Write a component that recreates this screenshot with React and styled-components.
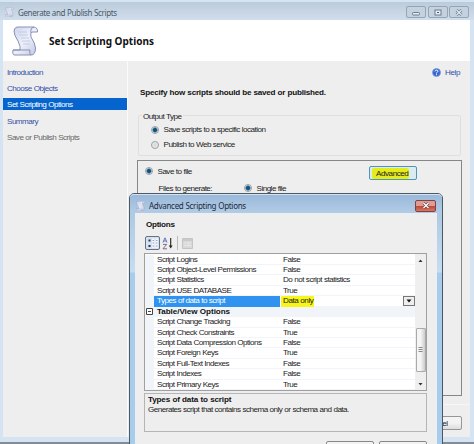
import React from "react";
import styled, { createGlobalStyle } from "styled-components";

const GlobalStyle = createGlobalStyle`
  * { box-sizing: border-box; }
  body {
    margin: 0;
    overflow: hidden;
    font-family: "Liberation Sans", Arial, sans-serif;
    font-size: 8.1px;
    letter-spacing: -0.52px;
    word-spacing: 0.2px;
    color: #1c1c1c;
  }
`;

const steps = [
  { label: "Introduction" },
  { label: "Choose Objects" },
  { label: "Set Scripting Options", active: true },
  { label: "Summary" },
  { label: "Save or Publish Scripts", disabled: true },
];

const options = [
  { name: "Script Logins", value: "False" },
  { name: "Script Object-Level Permissions", value: "False" },
  { name: "Script Statistics", value: "Do not script statistics" },
  { name: "Script USE DATABASE", value: "True" },
  { name: "Types of data to script", value: "Data only", selected: true },
  { name: "Table/View Options", category: true },
  { name: "Script Change Tracking", value: "False" },
  { name: "Script Check Constraints", value: "True" },
  { name: "Script Data Compression Options", value: "False" },
  { name: "Script Foreign Keys", value: "True" },
  { name: "Script Full-Text Indexes", value: "False" },
  { name: "Script Indexes", value: "False" },
  { name: "Script Primary Keys", value: "True" },
];

const ScrollIcon = ({ width, height }) => (
  <svg width={width} height={height} viewBox="0 0 26 30" preserveAspectRatio="none">
    <defs>
      <linearGradient id="paper" x1="0" y1="0" x2="1" y2="1">
        <stop offset="0" stopColor="#ccd4ed" />
        <stop offset=".5" stopColor="#edf0fa" />
        <stop offset="1" stopColor="#bfc6e4" />
      </linearGradient>
    </defs>
    <path
      d="M5 1H22Q26 2 25.5 6H20Q18 7 19 11Q23 17 23.5 22Q23.5 29 19 29H2Q0 28 1 24H8Q9 21 6 15Q2 9 2 5Q2 2 5 1Z"
      fill="url(#paper)"
      stroke="#8990b5"
      strokeWidth="1"
    />
    <path d="M22 1Q18 2 19 7M1 24H18Q17 28 19 29" fill="none" stroke="#8990b5" />
    <path d="M6 6H15M7 9H16M9 12H17M10 15H18M11 18H18" stroke="#bcc4de" strokeWidth=".8" />
  </svg>
);

const HelpIcon = () => (
  <svg width="9" height="9" viewBox="0 0 9 9">
    <circle cx="4.5" cy="4.5" r="4" fill="#3868ce" stroke="#7a9ce0" strokeWidth=".8" />
    <path d="M3 3.4Q3.2 2.1 4.5 2.1Q6 2.2 5.9 3.4Q5.7 4.2 4.5 4.8V5.4M4.5 6.2V7.2" fill="none" stroke="#fff" strokeWidth="1" />
  </svg>
);

const SortIcon = () => (
  <svg width="12" height="13" viewBox="0 0 12 13">
    <path d="M1 5.5L3 .8L5 5.5M1.7 4H4.4" fill="none" stroke="#536db2" strokeWidth=".9" />
    <path d="M1 7.4H4.7L1 11.8H5" fill="none" stroke="#6f6076" strokeWidth=".9" />
    <path d="M8.7 1V10" stroke="#222" strokeWidth="1.1" />
    <path d="M6.8 8.5H10.6L8.7 11.5Z" fill="#222" />
  </svg>
);

const CategoryIcon = () => (
  <svg width="12" height="11" viewBox="0 0 12 11">
    <path d="M5 .5H7.5V10H5ZM8.5 .5H11V10H8.5Z" fill="#f4f7fb" />
    <path d="M1.5 1.5H3.5V3.5H1.5ZM1.5 7H3.5V9H1.5Z" fill="#1d3a66" />
    <path d="M5.5 2.5H7M9 2.5H10.5M5.5 5H7M9 5H10.5M5.5 8H7M9 8H10.5" stroke="#93a9c6" />
  </svg>
);

const PageIcon = () => (
  <svg width="11" height="11" viewBox="0 0 11 11">
    <path d="M.5 .5H10.5V10.5H.5Z" fill="#d9d9d9" stroke="#c4c4c4" />
    <path d="M1 2H10" stroke="#bbb" />
    <path d="M2.5 5H4M5 5H8.5M2.5 7.5H4M5 7.5H8.5" stroke="#eee" />
  </svg>
);

function App() {
  return (
    <Desktop>
      <GlobalStyle />
      <Window>
        <TitleBar>
          <ScrollIcon width={9} height={10} />
          <TitleText>Generate and Publish Scripts</TitleText>
          <WindowButtons>
            <WindowButton>
              <svg width="8" height="7"><rect x=".5" y="3.5" width="7" height="2.5" rx=".8" fill="#eef3f8" stroke="#5c6b7d" /></svg>
            </WindowButton>
            <WindowButton>
              <svg width="8" height="7"><rect x="1" y="1" width="6" height="5" fill="#eef3f8" stroke="#5c6b7d" /><path d="M3 3.5H5" stroke="#445" /></svg>
            </WindowButton>
            <WindowButton>
              <svg width="8" height="7"><path d="M1.5 1L6.5 6M6.5 1L1.5 6" stroke="#5c6b7d" strokeWidth="2.6" /><path d="M1.5 1L6.5 6M6.5 1L1.5 6" stroke="#eef3f8" strokeWidth="1.2" /></svg>
            </WindowButton>
          </WindowButtons>
        </TitleBar>
        <Header>
          <ScrollIcon width={26} height={30} />
          <HeaderTitle>Set Scripting Options</HeaderTitle>
        </Header>
        <Body>
          <Sidebar>
            {steps.map((step) => (
              <Step key={step.label} $active={step.active} $disabled={step.disabled}>
                {step.label}
              </Step>
            ))}
          </Sidebar>
          <Main>
            <Help>
              <HelpIcon /> Help
            </Help>
            <Question>Specify how scripts should be saved or published.</Question>
            <OutputType>
              <Legend>Output Type</Legend>
              <RadioRow>
                <Radio $checked /> Save scripts to a specific location
              </RadioRow>
              <RadioRow>
                <Radio /> Publish to Web service
              </RadioRow>
            </OutputType>
            <FilePanel>
              <FileRow>
                <Radio $checked />
                <SaveLabel>Save to file</SaveLabel>
                <AdvancedButton>
                  <ButtonMark>Advanced</ButtonMark>
                </AdvancedButton>
              </FileRow>
              <GenerateRow>
                <GenerateLabel>Files to generate:</GenerateLabel>
                <Radio $checked />
                <span>Single file</span>
              </GenerateRow>
            </FilePanel>
            <Footer>
              <CancelButton>Cancel</CancelButton>
            </Footer>
          </Main>
        </Body>
      </Window>

      <Dialog>
        <DialogTitle>
          <ScrollIcon width={9} height={10} />
          <DialogTitleText>Advanced Scripting Options</DialogTitleText>
          <CloseButton>
            <svg width="8" height="7"><path d="M1.5 1L6.5 6M6.5 1L1.5 6" stroke="#703b42" strokeWidth="2.6" /><path d="M1.5 1L6.5 6M6.5 1L1.5 6" stroke="#fff" strokeWidth="1.4" /></svg>
          </CloseButton>
        </DialogTitle>
        <DialogBody>
          <OptionsHeading>Options</OptionsHeading>
          <Toolbar>
            <ToolButton><CategoryIcon /></ToolButton>
            <SortIcon />
            <Divider />
            <PageIcon />
          </Toolbar>
          <PropertyGrid>
            <Rows>
              {options.map((option) => (
                <Row key={option.name} $category={option.category}>
                  <Gutter>
                    {option.category && (
                      <svg width="7" height="7"><path d="M.5 .5H6.5V6.5H.5ZM2 3.5H5" fill="#fff" stroke="#444" /></svg>
                    )}
                  </Gutter>
                  <Name $selected={option.selected} $category={option.category}>{option.name}</Name>
                  <Value>
                    {option.selected ? <ValueMark>{option.value}</ValueMark> : option.value}
                    {option.selected && (
                      <DropButton>
                        <svg width="6" height="4"><path d="M.5 .5H5.5L3 3.5Z" fill="#111" /></svg>
                      </DropButton>
                    )}
                  </Value>
                </Row>
              ))}
            </Rows>
            <ScrollBar>
              <Arrow><svg width="5" height="3"><path d="M.5 3H4.5L2.5 .5Z" fill="#333" /></svg></Arrow>
              <Thumb>
                <svg width="5" height="6"><path d="M.5 .5H4.5M.5 2.5H4.5M.5 4.5H4.5" stroke="#888" /></svg>
              </Thumb>
              <Arrow><svg width="5" height="3"><path d="M.5 0H4.5L2.5 2.5Z" fill="#333" /></svg></Arrow>
            </ScrollBar>
          </PropertyGrid>
          <Description>
            <DescriptionTitle>Types of data to script</DescriptionTitle>
            <DescriptionText>Generates script that contains schema only or schema and data.</DescriptionText>
          </Description>
          <DialogActions>
            <ActionButton />
            <ActionButton />
          </DialogActions>
        </DialogBody>
      </Dialog>
    </Desktop>
  );
}
export default App;

const Desktop = styled.div`
  position: relative;
  width: 474px;
  height: 444px;
  overflow: hidden;
  white-space: nowrap;
  background: #858b94;
`;

// Main window

const Window = styled.div`
  height: 442px;
  display: flex;
  flex-direction: column;
  padding: 2px 4px 5px 3px;
  background: #d5e4f2;
`;

const TitleBar = styled.div`
  height: 18px;
  flex: none;
  display: flex;
  align-items: center;
  margin: 0 -4px 0 -3px;
  padding: 2px 5px 0;
  background: linear-gradient(#bccbda, #d0deec);
  svg { opacity: 0.85; }
`;

const TitleText = styled.span`
  margin-left: 4px;
  font-family: "Noto Sans", sans-serif;
  font-size: 8px;
  letter-spacing: -0.36px;
  color: #4a5968;
`;

const WindowButtons = styled.div`
  display: flex;
  gap: 1.5px;
  margin-left: auto;
`;

const WindowButton = styled.div`
  width: 20px;
  height: 12px;
  display: flex;
  align-items: center;
  justify-content: center;
  border: 1px solid #95a5b6;
  border-radius: 2px;
  background: #c4d2e0;
`;

const Header = styled.div`
  height: 41px;
  flex: none;
  display: flex;
  align-items: center;
  padding-left: 8.5px;
  background: #fff;
`;

const HeaderTitle = styled.h1`
  margin: 1px 0 0 11.5px;
  font-family: "Noto Sans", sans-serif;
  font-size: 10px;
  letter-spacing: 0;
  word-spacing: 0;
  color: #111;
`;

const Body = styled.div`
  flex: 1;
  display: flex;
  background: #eee;
`;

const Sidebar = styled.div`
  width: 125px;
  padding-top: 4.8px;
  border-right: 1px solid #fbfbfb;
`;

const Step = styled.div`
  height: 12px;
  width: 124px;
  margin-bottom: 4.3px;
  padding-left: 4px;
  line-height: 13px;
  color: ${(p) => (p.$active ? "#fff" : p.$disabled ? "#686868" : "#3450a8")};
  background: ${(p) => (p.$active ? "#0564cd" : "transparent")};
`;

const Main = styled.div`
  flex: 1;
  display: flex;
  flex-direction: column;
  padding-left: 9px;
`;

const Help = styled.div`
  height: 22px;
  display: flex;
  align-items: center;
  justify-content: flex-end;
  gap: 4px;
  padding-right: 10px;
  letter-spacing: -0.4px;
  color: #3450a8;
`;

const Question = styled.div`
  height: 20px;
  line-height: 20px;
  padding-left: 3px;
  font-weight: bold;
  letter-spacing: -0.21px;
  color: #111;
`;

const OutputType = styled.div`
  width: 323px;
  height: 41px;
  margin: 12px 0 4px 1px;
  border: 1px solid #dfdfdf;
  border-radius: 2px;
`;

const Legend = styled.div`
  width: 41px;
  height: 9px;
  margin: -4px 0 1px 3px;
  padding-left: 1px;
  line-height: 9px;
  background: #eee;
`;

const RadioRow = styled.div`
  height: 15px;
  display: flex;
  align-items: center;
  gap: 4.5px;
  padding-left: 12px;
`;

const Radio = styled.span`
  width: 8px;
  height: 8px;
  flex: none;
  border: 1px solid #979ea6;
  border-radius: 50%;
  background: ${(p) =>
    p.$checked
      ? "radial-gradient(circle, #134f78 0 1.5px, #8cb2cb 2.6px, #e8eef2 3px)"
      : "radial-gradient(#d5d5d5, #f5f5f5)"};
`;

const FilePanel = styled.div`
  width: 325px;
  height: 236px;
  border: 1px solid #878787;
  padding: 5px 0 0 7px;
`;

const FileRow = styled.div`
  display: flex;
  align-items: flex-start;
  height: 15px;
  ${Radio} { margin-top: 1px; }
`;

const SaveLabel = styled.span`
  margin-left: 4.5px;
  line-height: 11px;
`;

const AdvancedButton = styled.div`
  width: 48px;
  height: 14px;
  margin: 0 44px 0 auto;
  padding: 1px 2px;
  border: 1px solid #4f95b4;
  border-radius: 2px;
  background: #dcebf2;
`;

const ButtonMark = styled.div`
  width: 37px;
  height: 11px;
  padding-left: 4px;
  line-height: 11px;
  letter-spacing: -0.45px;
  border-radius: 2px;
  background: #e4ec1b;
`;

const GenerateRow = styled.div`
  display: flex;
  align-items: center;
  height: 14px;
  padding-left: 13.5px;
  span:last-child { margin-left: 4.5px; }
`;

const GenerateLabel = styled.span`
  width: 85.5px;
`;

const Footer = styled.div`
  flex: 1;
  display: flex;
  justify-content: flex-end;
  margin: 8px 0 0 -9px;
  padding: 11px 8px 0 0;
  border-top: 1px solid #f7f7f7;
`;

const CancelButton = styled.div`
  width: 48px;
  height: 14px;
  line-height: 13px;
  text-align: center;
  padding-right: 3px;
  border: 1px solid #969696;
  border-radius: 2px;
  background: linear-gradient(#f3f3f3 50%, #dcdcdc);
`;

// Dialog sits on top of the wizard and runs past the bottom edge

const Dialog = styled.div`
  position: absolute;
  left: 129px;
  top: 193px;
  width: 314px;
  height: 262px;
  padding: 0 5px;
  border: 1px solid #4b5964;
  border-radius: 5px 5px 0 0;
  background: linear-gradient(#a5c3df, #c6ddf1 78px, #a8cdec 79px);
`;

const DialogTitle = styled.div`
  height: 19px;
  display: flex;
  align-items: center;
  margin: 0 -5px;
  padding: 3px 6px 0;
  border-top: 1px solid #d4e3f1;
  border-radius: 4px 4px 0 0;
  background: linear-gradient(#9ab9d9, #b2cce6);
`;

const DialogTitleText = styled.span`
  margin-left: 4px;
  font-family: "Noto Sans", sans-serif;
  font-size: 8px;
  letter-spacing: -0.29px;
  color: #1d2a3c;
`;

const CloseButton = styled.div`
  width: 21px;
  height: 12px;
  display: flex;
  align-items: center;
  justify-content: center;
  margin-left: auto;
  border: 1px solid #814247;
  border-radius: 2px;
  background: linear-gradient(#dc9d92 45%, #bd4638 50%, #d47962);
`;

const DialogBody = styled.div`
  height: 240px;
  padding: 7px 10px 0 9px;
  background: #eee;
`;

const OptionsHeading = styled.div`
  height: 10px;
  padding-left: 2px;
  line-height: 10px;
  font-weight: bold;
  letter-spacing: -0.28px;
  color: #111;
`;

const Toolbar = styled.div`
  height: 23px;
  display: flex;
  align-items: center;
  padding: 3px 0 0 1px;
`;

const ToolButton = styled.div`
  width: 15px;
  height: 14px;
  display: flex;
  align-items: center;
  justify-content: center;
  margin-right: 2px;
  border: 1px solid #657386;
  border-radius: 2px;
  background: #d7e0ec;
`;

const Divider = styled.span`
  width: 1px;
  height: 14px;
  margin: 0 4px 0 3px;
  background: #bbb;
`;

const PropertyGrid = styled.div`
  height: 138px;
  display: flex;
  border: 1px solid #a0a0a0;
  background: #fff;
`;

const Rows = styled.div`
  flex: 1;
  padding-top: 0.5px;
`;

const Row = styled.div`
  height: 10.44px;
  display: flex;
  line-height: 10.4px;
  background: ${(p) => (p.$category ? "#f1f5fa" : "#fff")};
  border-bottom: 1px solid #f1f5fa;
`;

const Gutter = styled.div`
  width: 9px;
  height: 10.44px;
  display: flex;
  align-items: center;
  padding-left: 1px;
  background: #f1f5fa;
`;

const Name = styled.div`
  width: 126px;
  height: 10.44px;
  padding-left: 3px;
  color: ${(p) => (p.$selected ? "#fff" : p.$category ? "#111" : "#1c1c1c")};
  background: ${(p) => (p.$selected ? "#3093ef" : "transparent")};
  font-weight: ${(p) => (p.$category ? "bold" : "normal")};
  letter-spacing: ${(p) => (p.$category ? "-0.06px" : "inherit")};
`;

const Value = styled.div`
  flex: 1;
  display: flex;
  height: 10.44px;
  padding-left: 3px;
`;

const ValueMark = styled.span`
  height: 11px;
  margin-left: -2px;
  padding: 0 1px 0 2px;
  letter-spacing: -0.45px;
  border-radius: 1px;
  background: #f8f519;
`;

const DropButton = styled.div`
  width: 12px;
  height: 10px;
  display: flex;
  align-items: center;
  justify-content: center;
  margin-left: auto;
  border: 1px solid #777;
  background: #eee;
`;

const ScrollBar = styled.div`
  width: 11px;
  display: flex;
  flex-direction: column;
  align-items: center;
  justify-content: space-between;
  background: #efefef;
`;

const Arrow = styled.div`
  height: 12px;
  display: flex;
  align-items: center;
`;

const Thumb = styled.div`
  width: 10px;
  height: 44px;
  display: flex;
  align-items: center;
  justify-content: center;
  margin-top: 55px;
  border: 1px solid #aaa;
  border-radius: 1px;
  background: linear-gradient(90deg, #f5f5f5 45%, #ccc);
`;

const Description = styled.div`
  height: 39px;
  margin-top: 2px;
  padding: 1px 3px;
  border: 1px solid #b5b5b5;
`;

const DescriptionTitle = styled.div`
  line-height: 10px;
  font-weight: bold;
  letter-spacing: -0.14px;
  color: #111;
`;

const DescriptionText = styled.div`
  line-height: 10px;
`;

const DialogActions = styled.div`
  display: flex;
  justify-content: flex-end;
  gap: 5px;
  margin-top: 9px;
`;

const ActionButton = styled.div`
  width: 48px;
  height: 14px;
  border: 1px solid #888;
  border-radius: 2px;
  background: #f3f3f3;
`;
